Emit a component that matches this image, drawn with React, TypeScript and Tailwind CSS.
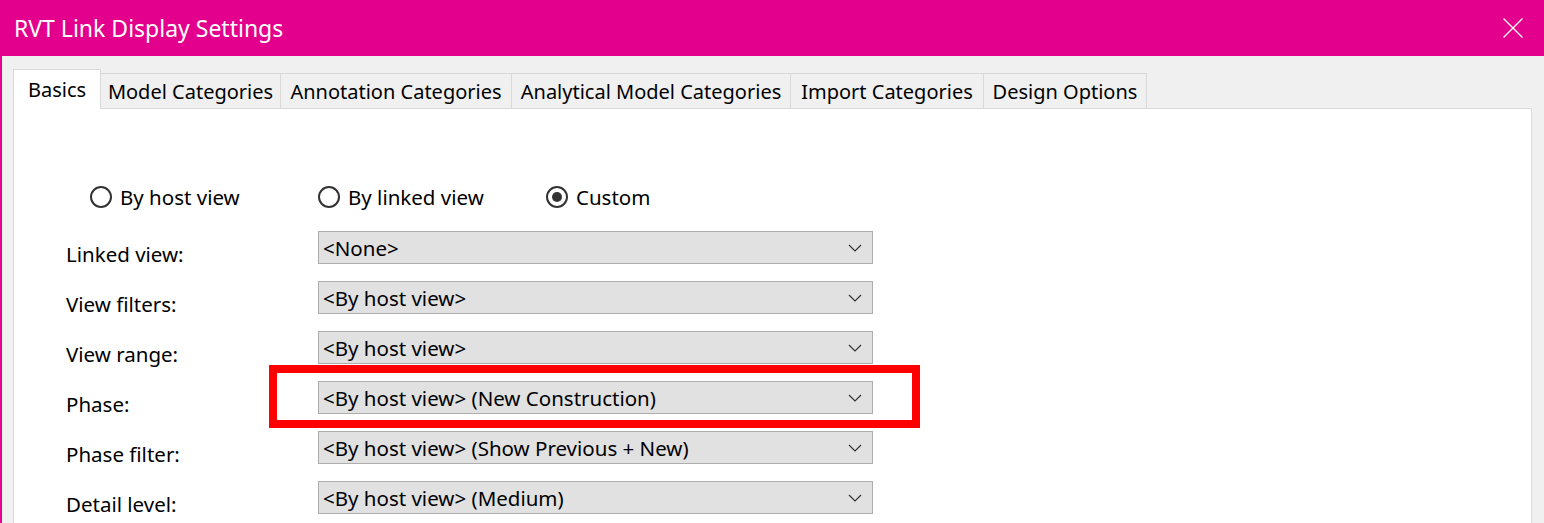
const tabs = [
  { label: 'Basics', w: 'w-[88px]' },
  { label: 'Model Categories', w: 'w-[180px]' },
  { label: 'Annotation Categories', w: 'w-[231px]' },
  { label: 'Analytical Model Categories', w: 'w-[279px]' },
  { label: 'Import Categories', w: 'w-[193px]' },
  { label: 'Design Options', w: 'w-[163px]' },
];

const rows = [
  { label: 'Linked view:', value: '<None>' },
  { label: 'View filters:', value: '<By host view>' },
  { label: 'View range:', value: '<By host view>' },
  { label: 'Phase:', value: '<By host view> (New Construction)', marked: true },
  { label: 'Phase filter:', value: '<By host view> (Show Previous + New)' },
  { label: 'Detail level:', value: '<By host view> (Medium)' },
];

function Radio({ label, checked }: { label: string; checked?: boolean }) {
  return (
    <label className="flex w-[228px] items-center gap-[8px] h-[28px]">
      <span className="flex h-[22px] w-[22px] items-center justify-center rounded-full border-2 border-[#333333] bg-white">
        {checked && <span className="h-[10px] w-[10px] rounded-full bg-[#333333]" />}
      </span>
      <span className="text-[20.5px]">{label}</span>
    </label>
  );
}

function Select({ value }: { value: string }) {
  return (
    <div className="flex h-[33px] w-[555px] items-center justify-between border border-[#adadad] bg-[#e1e1e1] pl-[4px] pr-[10px]">
      <span className="text-[20.5px] leading-[28px]">{value}</span>
      <svg width="14" height="8" viewBox="0 0 14 8" className="text-[#333333]">
        <polyline points="1,1 7,7 13,1" fill="none" stroke="currentColor" strokeWidth="1.2" />
      </svg>
    </div>
  );
}

export default function App() {
  return (
    <div className="h-[523px] w-[1544px] overflow-hidden bg-[#f0f0f0] text-[20px] text-black" style={{ fontFamily: '"Noto Sans", sans-serif' }}>
      <div className="flex h-[56px] items-center justify-between bg-[#e3008c] pl-[14px] pr-[21px] text-white">
        <span className="text-[23px] leading-none">RVT Link Display Settings</span>
        <svg width="20" height="20" viewBox="0 0 20 20">
          <path d="M0.5 0.5 L19.5 19.5 M19.5 0.5 L0.5 19.5" stroke="white" strokeWidth="1.3" fill="none" />
        </svg>
      </div>

      <div className="h-[467px] border-l-2 border-[#e3008c] pl-[11px] pt-[13px]">
        <div className="flex h-[39px] items-end">
          {tabs.map((t, i) =>
            i === 0 ? (
              <div key={t.label} className={`${t.w} relative z-10 flex h-[40px] -mb-px items-center justify-center border border-b-0 border-[#d9d9d9] bg-white`}>
                {t.label}
              </div>
            ) : (
              <div key={t.label} className={`${t.w} flex h-[35px] items-center justify-center border border-l-0 border-b-0 border-[#d9d9d9] bg-[#f0f0f0] pt-[2px]`}>
                {t.label}
              </div>
            )
          )}
        </div>

        <div className="h-[420px] w-[1519px] border border-[#d9d9d9] bg-white pl-[52px] pt-[74px]">
          <div className="flex pl-[24px]">
            <Radio label="By host view" />
            <Radio label="By linked view" />
            <Radio label="Custom" checked />
          </div>

          <div className="mt-[20px] flex flex-col gap-[17px]">
            {rows.map((r) => (
              <div key={r.label} className="flex h-[33px] items-start">
                <div className="w-[252px] pt-[9px] text-[20.5px] leading-[28px]">{r.label}</div>
                <div className="relative">
                  <Select value={r.value} />
                  {r.marked && (
                    <div className="absolute -left-[49px] -top-[16px] h-[63px] w-[651px] border-[8px] border-[#ff0000]" />
                  )}
                </div>
              </div>
            ))}
          </div>
        </div>
      </div>
    </div>
  );
}
